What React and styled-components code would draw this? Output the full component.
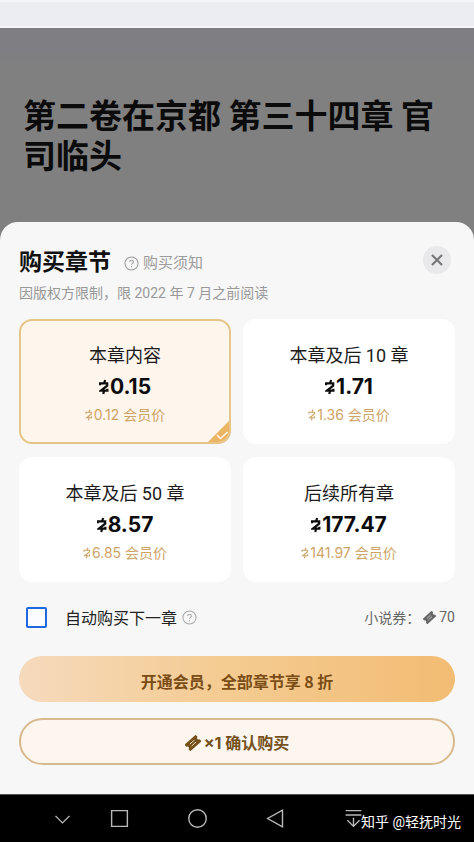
import React, { useState } from "react";
import styled, { createGlobalStyle } from "styled-components";

const GlobalStyle = createGlobalStyle`
  * { box-sizing: border-box; }
  body {
    margin: 0;
    background: #f7f7f7;
    font-family: Roboto, "Noto Sans CJK SC", sans-serif;
    color: #111;
  }
  h1, h2, p { margin: 0; }
  button { font: inherit; color: inherit; border: 0; background: none; padding: 0; cursor: pointer; }
  svg { display: block; flex: none; }
`;

const Screen = styled.div`
  min-height: 100vh;
  display: flex;
  flex-direction: column;
`;

const StatusBar = styled.header`
  height: 28px;
  background: #ebedf2;
  border-top: 2px solid #f4f6fa;
  border-bottom: 2px solid #f4f6fa;
`;

const Reader = styled.main`
  flex: 1;
  display: flex;
  flex-direction: column;
  justify-content: space-between;
  background: linear-gradient(#7e7e83 0, #7e7e83 20px, #808080 40px);
`;

const ChapterTitle = styled.h1`
  padding: 66px 23px 48px;
  font: 700 33px/40px "Noto Sans CJK SC", sans-serif;
  color: #0b0b0b;
`;

const Sheet = styled.section`
  display: flex;
  flex-direction: column;
  padding: 24px 19px 29px;
  border-radius: 18px 18px 0 0;
  background: #f7f7f7;
`;

const SheetHeader = styled.div`
  display: flex;
  align-items: center;
  height: 28px;
`;

const SheetTitle = styled.h2`
  font: 700 23px/28px "Noto Sans CJK SC", sans-serif;
`;

const NoticeButton = styled.button`
  display: flex;
  align-items: center;
  gap: 4px;
  margin: 6px auto 0 13px;
  font-size: 15px;
  line-height: 22px;
  color: #9b9b9b;
`;

const CloseButton = styled.button`
  display: grid;
  place-items: center;
  width: 28px;
  height: 28px;
  margin-right: 4px;
  border-radius: 50%;
  background: #e9e9eb;
`;

const Limit = styled.p`
  margin: 9px 0 16px;
  font-size: 14px;
  line-height: 20px;
  color: #999;
`;

const Options = styled.div`
  display: grid;
  grid-template-columns: 1fr 1fr;
  gap: 13px 12px;
`;

const OptionCard = styled.button`
  position: relative;
  overflow: hidden;
  display: flex;
  flex-direction: column;
  align-items: center;
  height: 125px;
  padding-top: 22px;
  border: 2px solid ${(p) => (p.$selected ? "#e6c588" : "#fff")};
  border-radius: 13px;
  background: ${(p) => (p.$selected ? "#fef5ec" : "#fff")};
`;

const OptionName = styled.span`
  font-size: 18px;
  line-height: 26px;
  color: #1c1c1c;
`;

const Price = styled.span`
  display: flex;
  align-items: center;
  gap: 1px;
  margin-top: 3px;
  font: 700 21px/30px Inter, "Noto Sans CJK SC", sans-serif;
  color: #0c0c0c;
`;

const MemberPrice = styled.span`
  display: flex;
  align-items: center;
  gap: 1px;
  margin-top: 2px;
  font: 400 14px/22px Inter, "Noto Sans CJK SC", sans-serif;
  color: #cda466;
`;

const SelectedCorner = styled.svg`
  position: absolute;
  right: -2px;
  bottom: -2px;
`;

const AutoRow = styled.div`
  display: flex;
  align-items: center;
  margin: 22px 0 26px;
  height: 26px;
`;

const AutoLabel = styled.label`
  display: flex;
  align-items: center;
  gap: 18px;
  font-size: 16px;
  color: #222;
`;

const CheckBox = styled.input`
  appearance: none;
  width: 21px;
  height: 21px;
  margin: 0 0 0 7px;
  border: 2px solid #1d68e0;
  border-radius: 2px;
  background: ${(p) => (p.checked ? "#1d68e0" : "#fafcff")};
`;

const HelpButton = styled.button`
  margin-left: 5px;
  color: #a8a8a8;
`;

const Coupons = styled.span`
  display: flex;
  align-items: center;
  gap: 3px;
  margin-left: auto;
  font-size: 14px;
  color: #666;
`;

const ActionButton = styled.button`
  display: flex;
  align-items: center;
  justify-content: center;
  gap: 3px;
  height: 46px;
  padding-top: 3px;
  border-radius: 23px;
  font: 700 16px/24px "Noto Sans CJK SC", sans-serif;
  color: #7b4d16;
`;

const MemberButton = styled(ActionButton)`
  background: linear-gradient(90deg, #f6dabd 0%, #f4cc93 45%, #f2bc73 100%);
`;

const ConfirmButton = styled(ActionButton)`
  margin-top: 16px;
  height: 47px;
  border: 2px solid #d8b98d;
  border-radius: 24px;
  background: #fcf6ef;
  color: #74501b;
`;

const Quantity = styled.span`
  font-family: Inter, "Noto Sans CJK SC", sans-serif;
`;

const NavBar = styled.nav`
  position: relative;
  display: grid;
  grid-template-columns: 36px repeat(4, 1fr);
  align-items: center;
  height: 48px;
  padding: 0 81px 0 44px;
  border-top: 1px solid #555;
  background: #000;
`;

const NavButton = styled.button`
  display: grid;
  place-items: center;
  height: 47px;
  color: #b9b9b9;
`;

const Watermark = styled.span`
  position: absolute;
  right: 13px;
  bottom: 10px;
  font-size: 14px;
  line-height: 20px;
  color: #fff;
`;

const HelpIcon = ({ size }) => (
  <svg width={size} height={size} viewBox="0 0 16 16" fill="none" stroke="currentColor" strokeWidth="1.1">
    <circle cx="8" cy="8" r="7" />
    <path d="M6 6.4c0-2.6 4-2.5 4-.1 0 1.5-2 1.6-2 3.1M8 10.6v1.3" />
  </svg>
);

const CoinIcon = ({ width, height, weight }) => (
  <svg width={width} height={height} viewBox="0 0 10 16" fill="none" stroke="currentColor" strokeWidth={weight}>
    <path d="M1 6.2V4.4H8.2V6.6L2 11.6H8.4V9.8" />
    <path d="M6.2 1 5 4.4M5.200 11.600 4.200 15" />
  </svg>
);

const TicketIcon = ({ size, stripe }) => (
  <svg width={size} height={size} viewBox="0 0 16 16">
    <g transform="rotate(-42 8 8)">
      <path
        fill="currentColor"
        d="M1.5 3.6h13q1 0 1 1v1.800q-1.500.3-1.500 1.600t1.500 1.600v1.800q0 1-1 1h-13q-1 0-1-1V9.600Q2 9.300 2 8T.5 6.400V4.600q0-1 1-1Z"
      />
      <path d="M5 6.700h6M5 9.300h6" fill="none" stroke={stripe} strokeWidth="0.900" />
    </g>
  </svg>
);

const CornerCheck = () => (
  <SelectedCorner width="25" height="25" viewBox="0 0 25 25">
    <path d="M25 0v12a13 13 0 0 1-13 13H0Z" fill="#ecb566" />
    <path d="m11 16 3.5 3.5 7-6.5" fill="none" stroke="#fff6e9" strokeWidth="1.6" />
  </SelectedCorner>
);

const options = [
  { name: "本章内容", price: "0.15", member: "0.12" },
  { name: "本章及后 10 章", price: "1.71", member: "1.36" },
  { name: "本章及后 50 章", price: "8.57", member: "6.85" },
  { name: "后续所有章", price: "177.47", member: "141.97" },
];

const navItems = [
  { label: "收起", d: "m4 9 8 8 8-8" },
  { label: "最近任务", d: "M3 3h18v18H3Z" },
  { label: "主页", d: "M12 2a10 10 0 1 1 0 20 10 10 0 0 1 0-20Z" },
  { label: "返回", d: "M20 2.500v19L3 12Z" },
  { label: "通知", d: "M3 3h18M3 8h18M12 11v9M5 14l7 7 7-7" },
];

export default function App() {
  const [selected, setSelected] = useState(0);
  const [auto, setAuto] = useState(false);

  return (
    <Screen>
      <GlobalStyle />
      <StatusBar />
      <Reader>
        <ChapterTitle>第二卷在京都 第三十四章 官司临头</ChapterTitle>
        <Sheet>
          <SheetHeader>
            <SheetTitle>购买章节</SheetTitle>
            <NoticeButton>
              <HelpIcon size={15} />
              购买须知
            </NoticeButton>
            <CloseButton aria-label="关闭">
              <svg width="12" height="12" viewBox="0 0 12 12" stroke="#77777b" strokeWidth="2.2">
                <path d="m1 1 10 10M11 1 1 11" />
              </svg>
            </CloseButton>
          </SheetHeader>
          <Limit>因版权方限制，限 2022 年 7 月之前阅读</Limit>
          <Options>
            {options.map((o, i) => (
              <OptionCard key={o.name} $selected={i === selected} aria-pressed={i === selected} onClick={() => setSelected(i)}>
                <OptionName>{o.name}</OptionName>
                <Price>
                  <CoinIcon width={10} height={16} weight={2.2} />
                  {o.price}
                </Price>
                <MemberPrice>
                  <CoinIcon width={8} height={12} weight={1.5} />
                  {o.member} 会员价
                </MemberPrice>
                {i === selected && <CornerCheck />}
              </OptionCard>
            ))}
          </Options>
          <AutoRow>
            <AutoLabel>
              <CheckBox type="checkbox" checked={auto} onChange={(e) => setAuto(e.target.checked)} />
              自动购买下一章
            </AutoLabel>
            <HelpButton aria-label="自动购买说明">
              <HelpIcon size={15} />
            </HelpButton>
            <Coupons>
              小说券：
              <TicketIcon size={13} stripe="#ddd" />
              70
            </Coupons>
          </AutoRow>
          <MemberButton>开通会员，全部章节享 8 折</MemberButton>
          <ConfirmButton>
            <TicketIcon size={16} stripe="#f3e3cb" />
            <Quantity>×1 确认购买</Quantity>
          </ConfirmButton>
        </Sheet>
      </Reader>
      <NavBar>
        {navItems.map((n) => (
          <NavButton key={n.label} aria-label={n.label}>
            <svg width="21" height="21" viewBox="0 0 24 24" fill="none" stroke="currentColor" strokeWidth="1.6">
              <path d={n.d} />
            </svg>
          </NavButton>
        ))}
        <Watermark>知乎 @轻抚时光</Watermark>
      </NavBar>
    </Screen>
  );
}
